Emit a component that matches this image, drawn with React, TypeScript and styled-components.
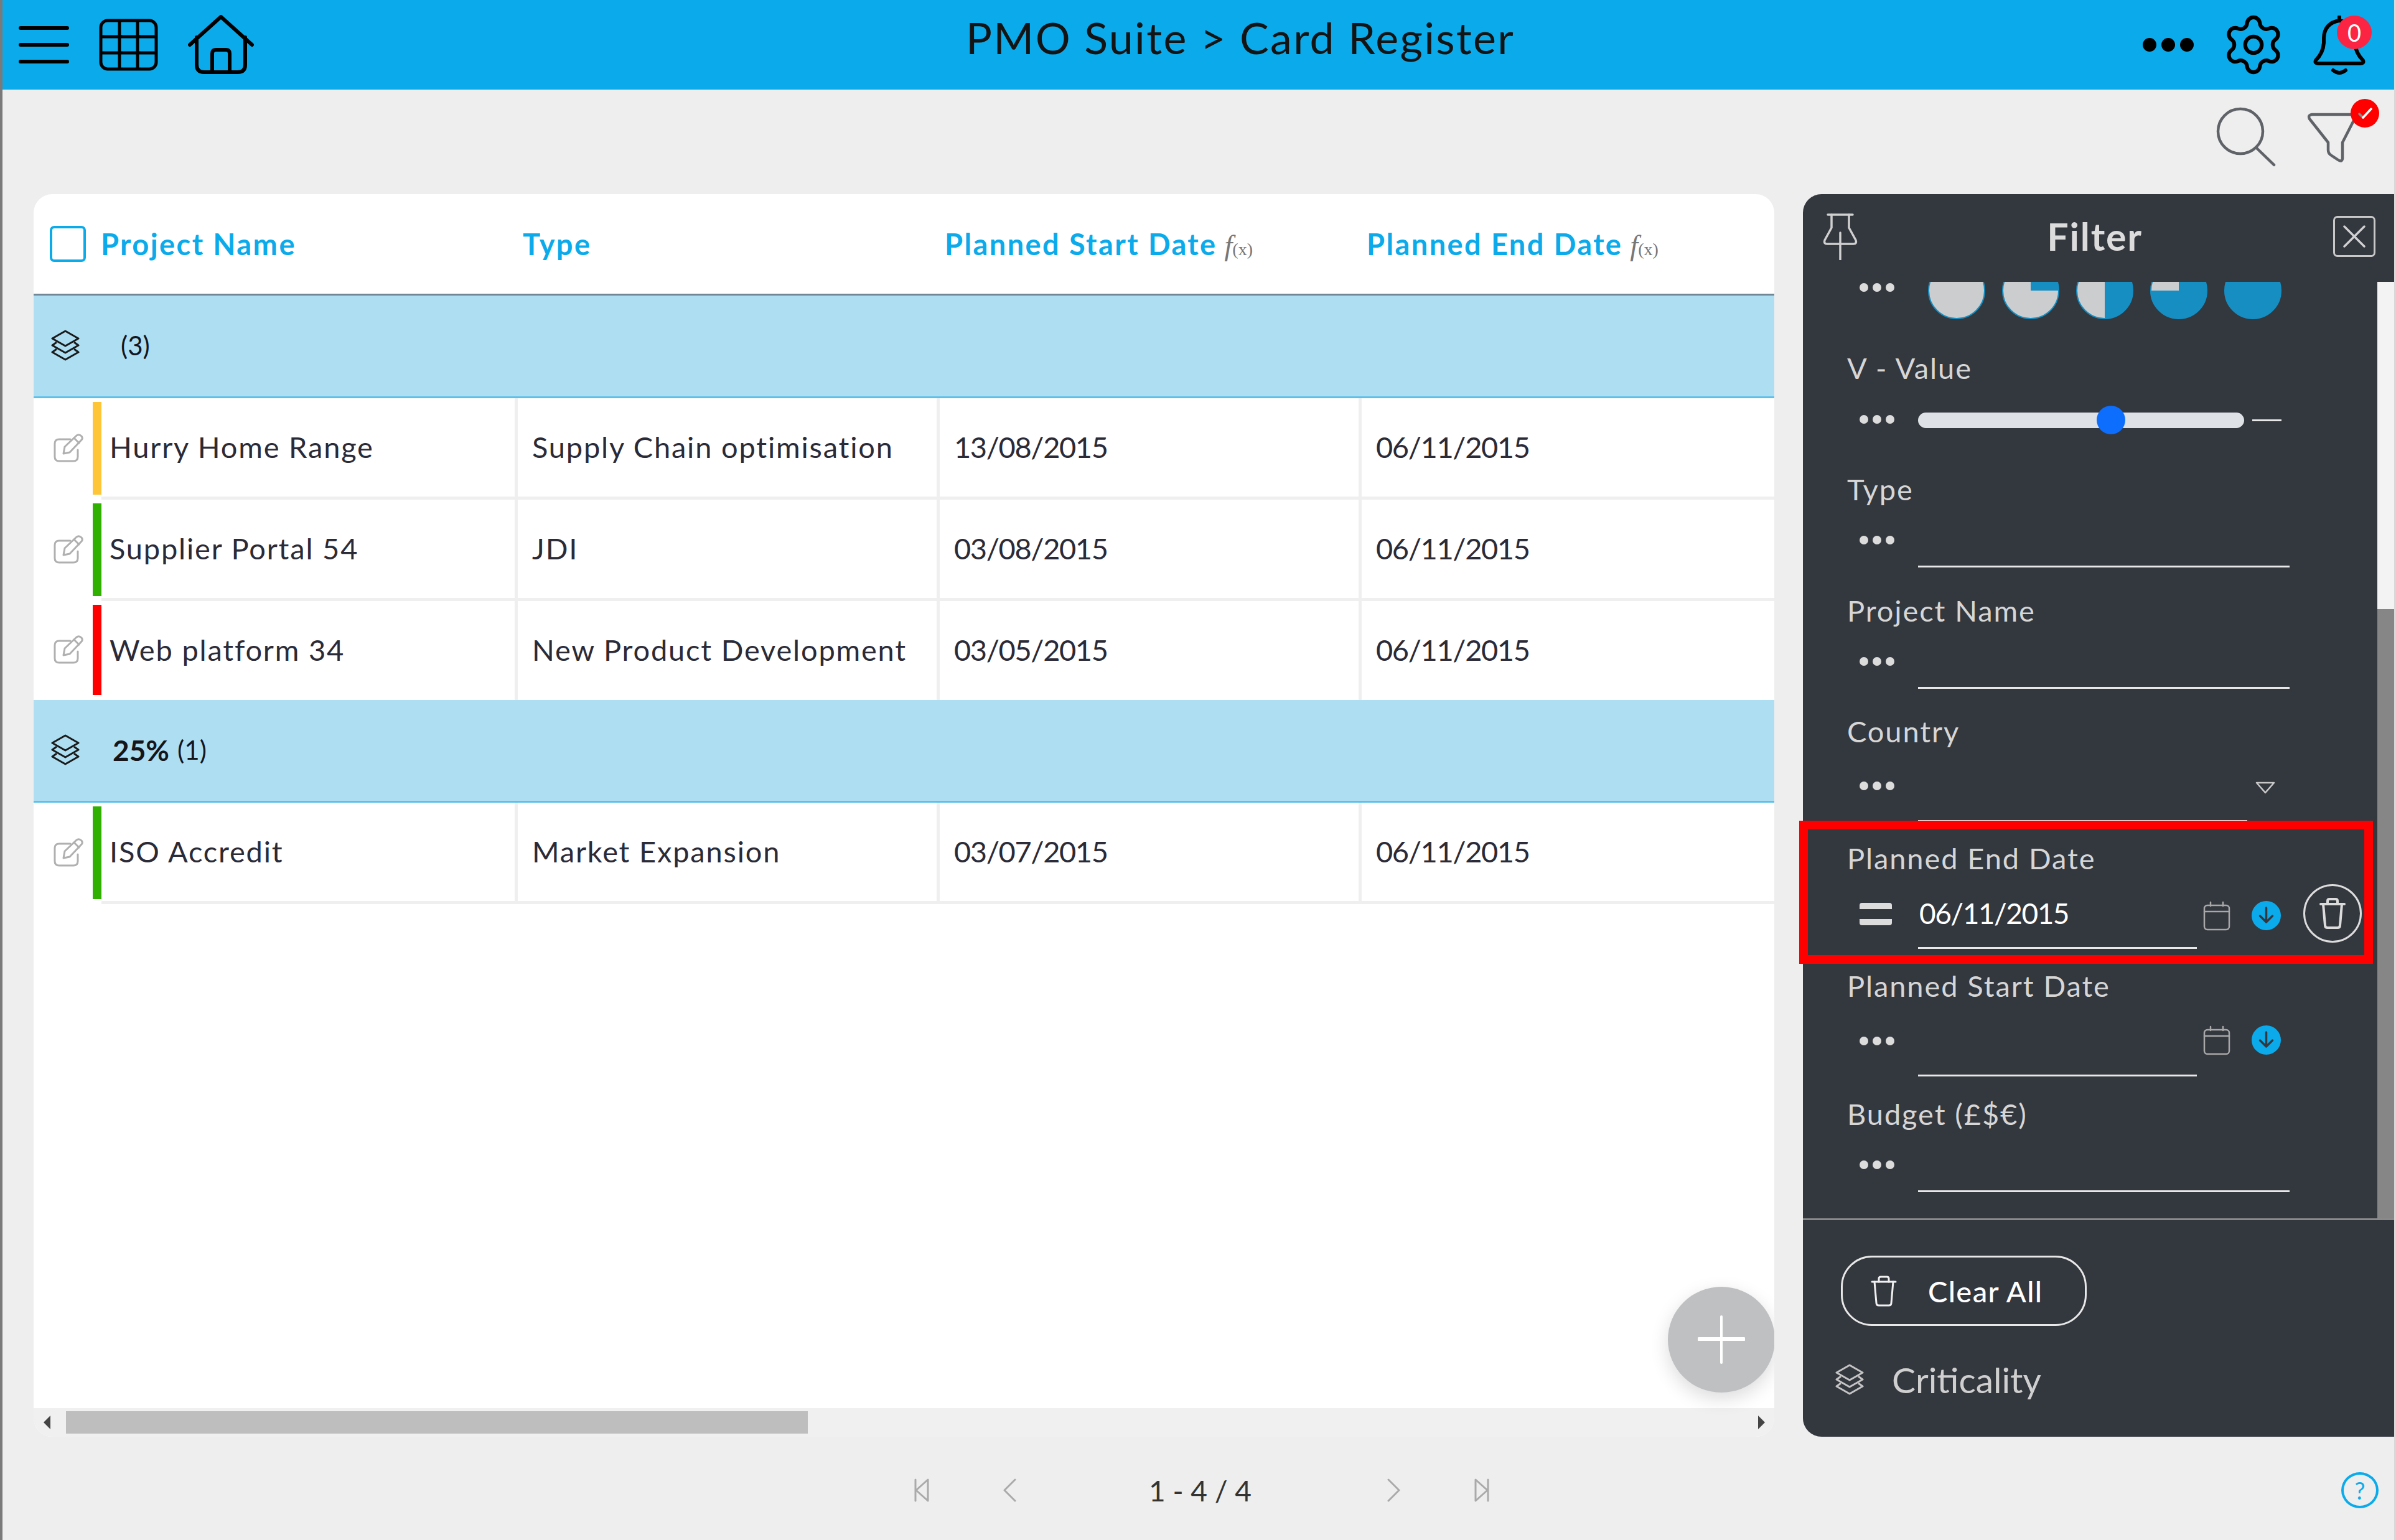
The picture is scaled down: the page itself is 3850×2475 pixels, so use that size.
import React from "react";
import styled, { createGlobalStyle } from "styled-components";
import { Settings } from "lucide-react";

const GlobalStyle = createGlobalStyle`
	html, body {
		margin: 0;
		padding: 0;
		background: #eeeeee;
	}
	* {
		box-sizing: border-box;
	}
`;

const Page = styled.div`
	width: 3850px;
	height: 2475px;
	overflow: hidden;
	display: flex;
	flex-direction: column;
	background: #eeeeee;
	border-left: 4px solid #7a7a7a;
	border-right: 3px solid #d8d8d8;
	font-family: "Lato", "Liberation Sans", sans-serif;
	color: #2b2b38;
`;

/* top bar */
const TopBar = styled.header`
	height: 144px;
	flex: none;
	display: flex;
	align-items: center;
	background: #0babeb;
	padding-right: 46px;
`;

const TopLeft = styled.div`
	width: 1548px;
	flex: none;
	display: flex;
	align-items: center;
	gap: 48px;
	padding-left: 26px;
`;

const Title = styled.h1`
	margin: 0 0 24px;
	font-size: 70px;
	font-weight: 400;
	letter-spacing: 2.3px;
	color: #141414;
	white-space: nowrap;
`;

const TopRight = styled.div`
	margin-left: auto;
	display: flex;
	align-items: center;
	gap: 52px;
`;

const BellWrap = styled.div`
	position: relative;
	width: 84px;
	height: 94px;
`;

const BellBadge = styled.span`
	position: absolute;
	top: 0;
	left: 38px;
	width: 56px;
	height: 54px;
	border-radius: 50%;
	background: #fb2543;
	color: #fff;
	font-size: 38px;
	line-height: 54px;
	text-align: center;
`;

/* search and filter row */
const SubBar = styled.div`
	height: 168px;
	flex: none;
	display: flex;
	align-items: center;
	justify-content: flex-end;
	gap: 50px;
	padding: 0 57px 16px 0;
`;

const FunnelWrap = styled.div`
	position: relative;
	width: 83px;
	height: 82px;
`;

const FunnelBadge = styled.span`
	position: absolute;
	top: -20px;
	left: 70px;
	width: 46px;
	height: 46px;
	border-radius: 50%;
	background: #ff0000;
	display: flex;
	align-items: center;
	justify-content: center;
`;

const Main = styled.main`
	height: 1997px;
	flex: none;
	display: flex;
	gap: 46px;
	padding-left: 50px;
`;

/* table */
const Card = styled.section`
	position: relative;
	width: 2797px;
	flex: none;
	display: flex;
	flex-direction: column;
	background: #fff;
	border-radius: 30px;
	overflow: hidden;
`;

const TableArea = styled.div`
	flex: 1;
	overflow: hidden;
`;

const HeaderRow = styled.div`
	display: grid;
	grid-template-columns: 95px repeat(4, 678px);
	height: 163px;
	align-items: center;
	border-bottom: 3px solid #6f8796;
`;

const CheckCell = styled.div`
	padding-left: 26px;
`;

const CheckBox = styled.span`
	display: block;
	width: 58px;
	height: 58px;
	border: 4px solid #0babeb;
	border-radius: 7px;
`;

const HeadCell = styled.div`
	padding-left: 13px;
	font-size: 47px;
	font-weight: 700;
	letter-spacing: 2.4px;
	color: #0babeb;
	white-space: nowrap;
`;

const Fx = styled.span`
	margin-left: 12px;
	font-family: "Liberation Serif", serif;
	font-style: italic;
	font-weight: 400;
	font-size: 46px;
	letter-spacing: 0;
	color: #777;

	small {
		font-size: 28px;
		font-style: normal;
	}
`;

const GroupRow = styled.div<{ $h: number }>`
	height: ${(p) => p.$h}px;
	display: flex;
	align-items: center;
	padding: 0 0 2px 28px;
	background: #addef2;
	border-bottom: 3px solid #5bc0ea;
	color: #15151c;
`;

const GroupValue = styled.b`
	margin-left: 53px;
	font-size: 46px;
	font-weight: 700;
`;

const GroupCount = styled.span`
	margin-left: 13px;
	font-size: 42px;
`;

const DataRow = styled.div<{ $last?: boolean }>`
	height: ${(p) => (p.$last ? 159 : 163)}px;
	display: grid;
	grid-template-columns: 95px 14px 664px repeat(3, 678px);
`;

const EditCell = styled.div`
	display: flex;
	align-items: center;
	padding: 0 0 3px 32px;
`;

const StatusBar = styled.div<{ $color: string }>`
	margin: 6px 0 8px;
	background: ${(p) => p.$color};
`;

const Cell = styled.div<{ $last?: boolean; $first?: boolean; $date?: boolean }>`
	display: flex;
	align-items: center;
	padding-left: ${(p) => (p.$first ? 13 : 23)}px;
	padding-bottom: 3px;
	font-size: 47px;
	letter-spacing: ${(p) => (p.$date ? "-1.4px" : "1.8px")};
	white-space: nowrap;
	border-left: ${(p) => (p.$first ? "none" : "5px solid #efefef")};
	border-bottom: ${(p) => (p.$last ? "none" : "5px solid #efefef")};
`;

const ScrollTrack = styled.div`
	height: 46px;
	flex: none;
	display: flex;
	align-items: center;
	padding: 0 15px 0 16px;
	background: #f0f0f0;
`;

const ScrollThumb = styled.div`
	width: 1192px;
	height: 36px;
	margin-left: 25px;
	background: #bebebe;
`;

const ScrollArrow = styled.span<{ $right?: boolean }>`
	width: 0;
	height: 0;
	border-top: 11px solid transparent;
	border-bottom: 11px solid transparent;
	${(p) => (p.$right ? "border-left: 11px solid #444; margin-left: auto;" : "border-right: 11px solid #444;")}
`;

const Fab = styled.button`
	position: absolute;
	right: -1px;
	bottom: 71px;
	width: 172px;
	height: 170px;
	padding: 0;
	border: none;
	border-radius: 50%;
	background: #bec0c2;
	box-shadow: 0 10px 30px rgba(0, 0, 0, 0.14);
	display: flex;
	align-items: center;
	justify-content: center;
`;

/* filter panel */
const Panel = styled.aside`
	flex: 1;
	display: flex;
	flex-direction: column;
	background: #33373e;
	border-radius: 30px 0 0 30px;
	color: #d8d8d8;
	position: relative;
`;

const PanelHead = styled.div`
	height: 141px;
	flex: none;
	display: grid;
	grid-template-columns: 1fr auto 1fr;
	align-items: center;
	padding: 0 44px 6px 32px;
`;

const PanelTitle = styled.div`
	font-size: 61px;
	font-weight: 700;
	letter-spacing: 1.8px;
	color: #dcdcdc;
`;

const CloseBox = styled.div`
	justify-self: end;
	width: 68px;
	height: 66px;
	margin-right: -14px;
	border: 3px solid #c8c8c8;
	border-radius: 7px;
	display: flex;
	align-items: center;
	justify-content: center;
`;

const PanelBody = styled.div`
	height: 1505px;
	flex: none;
	display: flex;
`;

const FieldList = styled.div`
	flex: 1;
	overflow: hidden;
	padding-left: 73px;
`;

const PanelScroll = styled.div`
	width: 27px;
	flex: none;
	display: flex;
	flex-direction: column;
	background: #868686;
`;

const PanelScrollTop = styled.div`
	height: 526px;
	background: #f3f3f3;
`;

const PieRow = styled.div`
	display: flex;
	align-items: center;
	gap: 25px;
	margin: -33px 0 50px;
`;

const DotsCell = styled.div<{ $up?: number }>`
	width: 112px;
	flex: none;
	display: flex;
	align-items: center;
	padding-left: 18px;
	padding-bottom: ${(p) => p.$up ?? 0}px;
`;

const PieDots = styled(DotsCell)`
	margin-right: -10px;
`;

const Field = styled.div<{ $h: number }>`
	height: ${(p) => p.$h}px;
`;

const FieldLabel = styled.div`
	height: 60px;
	margin-left: -2px;
	font-size: 47px;
	line-height: 54px;
	letter-spacing: 1.9px;
	color: #d6d6d6;
	white-space: nowrap;
`;

const FieldRow = styled.div<{ $h: number; $pad?: number }>`
	height: ${(p) => p.$h}px;
	display: flex;
	align-items: stretch;

	& > * {
		margin-top: ${(p) => p.$pad ?? 0}px;
	}
`;

const Underlined = styled.div<{ $w: number }>`
	width: ${(p) => p.$w}px;
	flex: none;
	display: flex;
	align-items: center;
	margin-top: 0 !important;
	border-bottom: 3px solid #e8e8e8;
`;

const FieldValue = styled.span`
	margin-left: 2px;
	font-size: 46px;
	letter-spacing: -1.5px;
	color: #fff;
`;

const Adorn = styled.div<{ $gap: number }>`
	display: flex;
	align-items: center;
	padding: 0 0 4px ${(p) => p.$gap}px;
	gap: 34px;
`;

const EqualsMark = styled.span`
	display: block;
	width: 52px;
	height: 36px;
	border-top: 10px solid #dcdcdc;
	border-bottom: 10px solid #dcdcdc;
	border-radius: 4px;
`;

const SliderWrap = styled.div`
	display: flex;
	align-items: center;
`;

const SliderTrack = styled.div`
	position: relative;
	width: 524px;
	height: 25px;
	border-radius: 13px;
	background: #dee2e6;
`;

const SliderThumb = styled.span`
	position: absolute;
	top: -11px;
	left: 287px;
	width: 46px;
	height: 46px;
	border-radius: 50%;
	background: #0d6efd;
`;

const SliderDash = styled.span`
	width: 47px;
	height: 3px;
	margin-left: 13px;
	background: #e8e8e8;
`;

const DeleteRound = styled.div`
	width: 94px;
	height: 94px;
	margin: -8px 0 0 2px;
	border: 3px solid #dcdcdc;
	border-radius: 50%;
	display: flex;
	align-items: center;
	justify-content: center;
`;

const RedFrame = styled.div`
	position: absolute;
	left: -6px;
	top: 1007px;
	width: 922px;
	height: 230px;
	border: 14px solid #ff0000;
	pointer-events: none;
`;

const PanelFoot = styled.div`
	flex: 1;
	border-top: 3px solid #8a8a8a;
	padding: 57px 0 0 52px;
`;

const ClearButton = styled.button`
	width: 395px;
	height: 113px;
	margin-left: 9px;
	padding: 0 0 0 44px;
	display: flex;
	align-items: center;
	gap: 49px;
	border: 3px solid #e8e8e8;
	border-radius: 50px;
	background: transparent;
	color: #fff;
	font-family: inherit;
	font-size: 47px;
	font-weight: 500;
	letter-spacing: 1.4px;
`;

const GroupBy = styled.div`
	margin-top: 52px;
	display: flex;
	align-items: center;
	gap: 45px;
	font-size: 57px;
	color: #cfcfcf;
`;

/* pager */
const Pager = styled.footer`
	flex: 1;
	display: flex;
	align-items: center;
	padding: 6px 25px 0 1464px;
`;

const PagerItem = styled.span<{ $ml: number }>`
	display: flex;
	margin-left: ${(p) => p.$ml}px;
`;

const PagerText = styled.span<{ $ml: number }>`
	margin-left: ${(p) => p.$ml}px;
	font-size: 46px;
	color: #333;
	white-space: nowrap;
`;

const HelpMark = styled.span`
	margin-left: auto;
	width: 60px;
	height: 58px;
	border: 4px solid #0babeb;
	border-radius: 50%;
	color: #0babeb;
	font-size: 38px;
	line-height: 50px;
	text-align: center;
`;

function Dots({ r = 7, gap = 21, color = "#dcdcdc" }: { r?: number; gap?: number; color?: string }) {
	return (
		<svg width={r * 2 + gap * 2} height={r * 2} style={{ display: "block" }}>
			{[0, 1, 2].map((i) => (
				<circle key={i} cx={r + i * gap} cy={r} r={r} fill={color} />
			))}
		</svg>
	);
}

function Layers({ color = "#1a1a1a", w = 46 }: { color?: string; w?: number }) {
	return (
		<svg width={w} height={50} viewBox="0 0 46 50" fill="none" stroke={color} strokeWidth={3} strokeLinejoin="round">
			<path d="M23 2 L44 14 L23 26 L2 14 Z" />
			<path d="M9 20 L2 25 L23 37 L44 25 L37 20" />
			<path d="M9 31 L2 36 L23 48 L44 36 L37 31" />
		</svg>
	);
}

function EditIcon() {
	return (
		<svg width={48} height={46} viewBox="0 0 48 46" fill="none" stroke="#b0b0b0" strokeWidth={3} strokeLinecap="round" strokeLinejoin="round">
			<path d="M27 9 H9 Q2 9 2 16 V37 Q2 44 9 44 H32 Q39 44 39 37 V26" />
			<path d="M16 32 L18 21 L37 3 Q41 0 45 4 Q48 8 44 11 L26 30 Z" />
			<path d="M33 7 L41 15" />
		</svg>
	);
}

function Trash({ color = "#dcdcdc", sw = 4 }: { color?: string; sw?: number }) {
	return (
		<svg width={44} height={50} viewBox="0 0 44 50" fill="none" stroke={color} strokeWidth={sw} strokeLinecap="round" strokeLinejoin="round">
			<path d="M3 10 H41" />
			<path d="M14 10 V5 Q14 2 17 2 H27 Q30 2 30 5 V10" />
			<path d="M7 10 L10 44 Q10 48 14 48 H30 Q34 48 34 44 L37 10" />
		</svg>
	);
}

function CalendarIcon() {
	return (
		<svg width={44} height={48} viewBox="0 0 44 48" fill="none" stroke="#a8a8a8" strokeWidth={2.5} strokeLinecap="round">
			<rect x={2} y={7} width={40} height={39} rx={5} />
			<path d="M2 17 H42" />
			<path d="M12 2 V8" />
			<path d="M32 2 V8" />
		</svg>
	);
}

function ArrowCircle() {
	return (
		<svg width={47} height={47} viewBox="0 0 47 47" fill="none">
			<circle cx={23.5} cy={23.5} r={23.5} fill="#0babeb" />
			<path d="M23.5 11 V34 M13.5 24 L23.5 34 L33.5 24" stroke="#33373e" strokeWidth={3.5} strokeLinecap="round" strokeLinejoin="round" />
		</svg>
	);
}

function Pie({ value }: { value: number }) {
	const r = 45;
	const c = 47;
	const angle = (value / 100) * 2 * Math.PI;
	const x = c + r * Math.sin(angle);
	const y = c - r * Math.cos(angle);
	return (
		<svg width={94} height={94} viewBox="0 0 94 94" style={{ display: "block", flex: "none" }}>
			<circle cx={c} cy={c} r={r} fill={value === 100 ? "#178ec1" : "#cccdcf"} stroke="#178ec1" strokeWidth={2} />
			{value > 0 && value < 100 && (
				<path d={`M${c} ${c} L${c} ${c - r} A${r} ${r} 0 ${value > 50 ? 1 : 0} 1 ${x} ${y} Z`} fill="#178ec1" />
			)}
		</svg>
	);
}

const pagerPaths = {
	first: "M3 2 V36 M4 19 L23 2 V36 Z",
	prev: "M21 2 L4 19 L21 36",
	next: "M3 2 L20 19 L3 36",
	last: "M23 2 V36 M22 19 L3 2 V36 Z",
};

function PagerIcon({ name }: { name: keyof typeof pagerPaths }) {
	return (
		<svg width={26} height={38} viewBox="0 0 26 38" fill="none" stroke="#aaaaaa" strokeWidth={3} strokeLinejoin="round" strokeLinecap="round">
			<path d={pagerPaths[name]} />
		</svg>
	);
}

const rows = [
	{ name: "Hurry Home Range", type: "Supply Chain optimisation", start: "13/08/2015", color: "#fec536" },
	{ name: "Supplier Portal 54", type: "JDI", start: "03/08/2015", color: "#30b000" },
	{ name: "Web platform 34", type: "New Product Development", start: "03/05/2015", color: "#ff0000" },
];

function Row({ item, last }: { item: (typeof rows)[number]; last?: boolean }) {
	return (
		<DataRow $last={last}>
			<EditCell>
				<EditIcon />
			</EditCell>
			<StatusBar $color={item.color} />
			<Cell $first $last={last}>{item.name}</Cell>
			<Cell $last={last}>{item.type}</Cell>
			<Cell $date $last={last}>{item.start}</Cell>
			<Cell $date $last={last}>06/11/2015</Cell>
		</DataRow>
	);
}

export default function App() {
	return (
		<>
			<GlobalStyle />
			<Page>
				<TopBar>
					<TopLeft>
						<svg width={81} height={62} viewBox="0 0 81 62" fill="none" stroke="#000" strokeWidth={6} strokeLinecap="round">
							<path d="M3 4 H78 M3 31 H78 M3 58 H78" />
						</svg>
						<svg width={95} height={84} viewBox="0 0 95 84" fill="none" stroke="#000" strokeWidth={5}>
							<rect x={3} y={3} width={89} height={78} rx={11} />
							<path d="M33 3 V81 M62 3 V81 M3 29 H92 M3 55 H92" />
						</svg>
						<svg width={106} height={96} viewBox="0 0 106 96" fill="none" stroke="#000" strokeWidth={6} strokeLinecap="round" strokeLinejoin="round">
							<path d="M3 48 L53 3 L103 48" />
							<path d="M14 36 V80 Q14 92 26 92 H80 Q92 92 92 80 V36" />
							<path d="M39 92 V62 Q39 56 45 56 H61 Q67 56 67 62 V92" />
						</svg>
					</TopLeft>
					<Title>PMO Suite &gt; Card Register</Title>
					<TopRight>
						<Dots r={11} gap={30} color="#000" />
						<Settings size={106} strokeWidth={1.4} color="#000" style={{ margin: "0 -9px" }} />
						<BellWrap>
							<svg width={84} height={96} viewBox="0 0 84 96" fill="none" stroke="#000" strokeWidth={6} strokeLinecap="round" strokeLinejoin="round">
								<path d="M4 72 Q16 60 17 44 V36 Q18 12 42 8 Q66 12 67 36 V44 Q68 60 80 72 Q82 77 76 77 H8 Q2 77 4 72 Z" />
								<path d="M42 2 V8" />
								<path d="M32 88 Q42 96 52 88" />
							</svg>
							<BellBadge>0</BellBadge>
						</BellWrap>
					</TopRight>
				</TopBar>

				<SubBar>
					<svg width={96} height={96} viewBox="0 0 96 96" fill="none" stroke="#5f6368" strokeWidth={4.5} strokeLinecap="round">
						<circle cx={39} cy={39} r={36} />
						<path d="M64 65 L93 93" />
					</svg>
					<FunnelWrap>
						<svg width={83} height={84} viewBox="0 0 83 84" fill="none" stroke="#5f6368" strokeWidth={4.5} strokeLinejoin="round">
							<path d="M4 12 Q1 6 8 5 H80 L57 50 V76 Q56 82 50 78 L38 70 Q34 67 34 62 V50 Z" />
						</svg>
						<FunnelBadge>
							<svg width={26} height={20} viewBox="0 0 26 20" fill="none" strokeWidth={3.5} strokeLinecap="round" strokeLinejoin="round">
								<path d="M4 11 L10 17" stroke="#8a8a8a" />
								<path d="M10 17 L23 3" stroke="#fff" />
							</svg>
						</FunnelBadge>
					</FunnelWrap>
				</SubBar>

				<Main>
					<Card>
						<TableArea>
							<HeaderRow>
								<CheckCell>
									<CheckBox />
								</CheckCell>
								<HeadCell>Project Name</HeadCell>
								<HeadCell>Type</HeadCell>
								<HeadCell>
									Planned Start Date<Fx>f<small>(x)</small></Fx>
								</HeadCell>
								<HeadCell>
									Planned End Date<Fx>f<small>(x)</small></Fx>
								</HeadCell>
							</HeaderRow>
							<GroupRow $h={165}>
								<Layers />
								<GroupValue />
								<GroupCount>(3)</GroupCount>
							</GroupRow>
							<Row item={rows[0]} />
							<Row item={rows[1]} />
							<Row item={rows[2]} last />
							<GroupRow $h={165}>
								<Layers />
								<GroupValue>25%</GroupValue>
								<GroupCount>(1)</GroupCount>
							</GroupRow>
							<Row item={{ name: "ISO Accredit", type: "Market Expansion", start: "03/07/2015", color: "#30b000" }} />
						</TableArea>
						<ScrollTrack>
							<ScrollArrow />
							<ScrollThumb />
							<ScrollArrow $right />
						</ScrollTrack>
						<Fab aria-label="Add">
							<svg width={76} height={78} viewBox="0 0 76 78" fill="none" stroke="#fff" strokeLinecap="round">
								<path d="M2 38 H74" strokeWidth={6} />
								<path d="M38 2 V76" strokeWidth={4} />
							</svg>
						</Fab>
					</Card>

					<Panel>
						<PanelHead>
							<svg width={56} height={76} viewBox="0 0 56 76" fill="none" stroke="#d0d0d0" strokeWidth={3.5} strokeLinejoin="round" strokeLinecap="round">
								<path d="M8 3 H48" />
								<path d="M14 3 V24 L3 44 Q1 50 7 50 H49 Q55 50 53 44 L42 24 V3" />
								<path d="M28 32 V75" />
							</svg>
							<PanelTitle>Filter</PanelTitle>
							<CloseBox>
								<svg width={36} height={36} viewBox="0 0 36 36" stroke="#d0d0d0" strokeWidth={3.5} strokeLinecap="round">
									<path d="M2 2 L34 34 M34 2 L2 34" />
								</svg>
							</CloseBox>
						</PanelHead>

						<PanelBody>
							<FieldList>
								<PieRow>
									<PieDots $up={10}>
										<Dots />
									</PieDots>
									<Pie value={0} />
									<Pie value={25} />
									<Pie value={50} />
									<Pie value={75} />
									<Pie value={100} />
								</PieRow>

								<Field $h={195}>
									<FieldLabel>V - Value</FieldLabel>
									<FieldRow $h={93} $pad={10}>
										<DotsCell $up={4}>
											<Dots />
										</DotsCell>
										<SliderWrap>
											<SliderTrack>
												<SliderThumb />
											</SliderTrack>
											<SliderDash />
										</SliderWrap>
									</FieldRow>
								</Field>

								<Field $h={195}>
									<FieldLabel>Type</FieldLabel>
									<FieldRow $h={93} $pad={10}>
										<DotsCell $up={6}>
											<Dots />
										</DotsCell>
										<Underlined $w={597} />
									</FieldRow>
								</Field>

								<Field $h={194}>
									<FieldLabel>Project Name</FieldLabel>
									<FieldRow $h={93} $pad={10}>
										<DotsCell $up={6}>
											<Dots />
										</DotsCell>
										<Underlined $w={597} />
									</FieldRow>
								</Field>

								<Field $h={204}>
									<FieldLabel>Country</FieldLabel>
									<FieldRow $h={113}>
										<DotsCell $up={4}>
											<Dots />
										</DotsCell>
										<Underlined $w={529} />
										<Adorn $gap={13}>
											<svg width={32} height={20} viewBox="0 0 32 20" fill="none" stroke="#c8c8c8" strokeWidth={2.5} strokeLinejoin="round" style={{ marginTop: 6 }}>
												<path d="M2 2 H30 L16 18 Z" />
											</svg>
										</Adorn>
									</FieldRow>
								</Field>

								<Field $h={205}>
									<FieldLabel>Planned End Date</FieldLabel>
									<FieldRow $h={113} $pad={10}>
										<DotsCell $up={10}>
											<EqualsMark />
										</DotsCell>
										<Underlined $w={448}>
											<FieldValue>06/11/2015</FieldValue>
										</Underlined>
										<Adorn $gap={10}>
											<CalendarIcon />
											<ArrowCircle />
											<DeleteRound>
												<Trash />
											</DeleteRound>
										</Adorn>
									</FieldRow>
								</Field>

								<Field $h={206}>
									<FieldLabel>Planned Start Date</FieldLabel>
									<FieldRow $h={113}>
										<DotsCell $up={2}>
											<Dots />
										</DotsCell>
										<Underlined $w={448} />
										<Adorn $gap={10}>
											<CalendarIcon />
											<ArrowCircle />
										</Adorn>
									</FieldRow>
								</Field>

								<Field $h={180}>
									<FieldLabel>Budget (£$€)</FieldLabel>
									<FieldRow $h={93} $pad={10}>
										<DotsCell $up={6}>
											<Dots />
										</DotsCell>
										<Underlined $w={597} />
									</FieldRow>
								</Field>
							</FieldList>
							<PanelScroll>
								<PanelScrollTop />
							</PanelScroll>
						</PanelBody>

						<PanelFoot>
							<ClearButton>
								<Trash color="#f0f0f0" sw={3} />
								Clear All
							</ClearButton>
							<GroupBy>
								<Layers color="#c4c4c4" />
								Criticality
							</GroupBy>
						</PanelFoot>
						<RedFrame />
					</Panel>
				</Main>

				<Pager>
					<PagerItem $ml={0}>
						<PagerIcon name="first" />
					</PagerItem>
					<PagerItem $ml={116}>
						<PagerIcon name="prev" />
					</PagerItem>
					<PagerText $ml={210}>1 - 4 / 4</PagerText>
					<PagerItem $ml={217}>
						<PagerIcon name="next" />
					</PagerItem>
					<PagerItem $ml={114}>
						<PagerIcon name="last" />
					</PagerItem>
					<HelpMark>?</HelpMark>
				</Pager>
			</Page>
		</>
	);
}
